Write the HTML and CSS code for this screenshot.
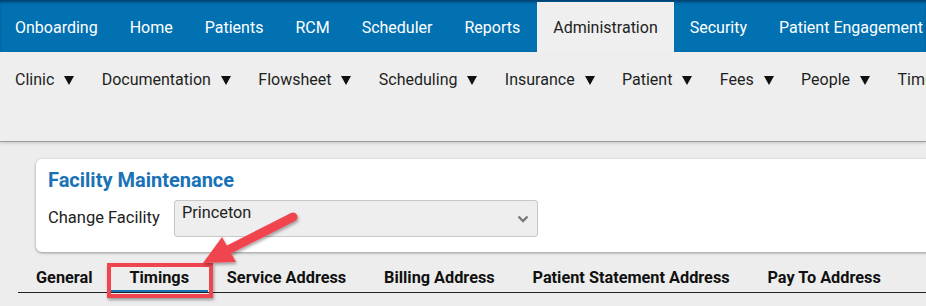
FILE: index.html
```html
<!DOCTYPE html>
<html>
<head>
<meta charset="utf-8">
<link rel="stylesheet" href="styles.css">
</head>
<body>
<nav class="topnav">
  <a class="top-item">Onboarding</a>
  <a class="top-item">Home</a>
  <a class="top-item">Patients</a>
  <a class="top-item">RCM</a>
  <a class="top-item">Scheduler</a>
  <a class="top-item">Reports</a>
  <a class="top-item active">Administration</a>
  <a class="top-item">Security</a>
  <a class="top-item">Patient Engagement</a>
</nav>
<nav class="subnav">
  <span class="sub-item">Clinic<span class="caret"></span></span>
  <span class="sub-item">Documentation<span class="caret"></span></span>
  <span class="sub-item">Flowsheet<span class="caret"></span></span>
  <span class="sub-item">Scheduling<span class="caret"></span></span>
  <span class="sub-item">Insurance<span class="caret"></span></span>
  <span class="sub-item">Patient<span class="caret"></span></span>
  <span class="sub-item">Fees<span class="caret"></span></span>
  <span class="sub-item">People<span class="caret"></span></span>
  <span class="sub-item">Timings<span class="caret"></span></span>
</nav>
<main class="content">
  <section class="card">
    <h1 class="title">Facility Maintenance</h1>
    <div class="field-row">
      <label class="label">Change Facility</label>
      <div class="select">
        <span class="select-value">Princeton</span>
        <svg class="chev" width="12" height="8" viewBox="0 0 12 8"><path d="M1.5 1.5 L6 6 L10.5 1.5" fill="none" stroke="#7a7a7a" stroke-width="2.4"/></svg>
      </div>
    </div>
  </section>
  <div class="tabs">
    <span class="tab">General</span>
    <span class="tab selected">Timings</span>
    <span class="tab">Service Address</span>
    <span class="tab">Billing Address</span>
    <span class="tab">Patient Statement Address</span>
    <span class="tab">Pay To Address</span>
  </div>
</main>
<div class="callout-box"></div>
<svg class="callout-arrow" width="926" height="306" viewBox="0 0 926 306">
  <defs>
    <filter id="sh" x="-20%" y="-20%" width="140%" height="140%">
      <feDropShadow dx="1" dy="2" stdDeviation="1.5" flood-color="#000" flood-opacity="0.35"/>
    </filter>
  </defs>
  <g filter="url(#sh)">
    <line x1="293" y1="217" x2="226" y2="251" stroke="#f0454f" stroke-width="9" stroke-linecap="round"/>
    <polygon points="203,263 236,262 222,237" fill="#f0454f"/>
  </g>
</svg>
</body>
</html>
```
FILE: styles.css
```css
* { box-sizing: border-box; }
html, body { margin: 0; padding: 0; }
body {
  width: 926px;
  height: 306px;
  overflow: hidden;
  font-family: Roboto, "Liberation Sans", Arial, sans-serif;
  background: #ededed;
  position: relative;
}
.topnav {
  display: flex;
  height: 52px;
  background: #0171b1;
  box-shadow: inset 0 3px 3px -1px rgba(0, 20, 50, 0.55);
  white-space: nowrap;
}
.top-item {
  display: flex;
  align-items: center;
  padding: 0 16px 0 15px;
  margin-right: 1px;
  color: #fff;
  font-size: 16px;
  margin-top: 2px;
}
.top-item.active {
  background: #efefef;
  color: #222;
  padding: 0 16px 0 16px;
}
.subnav {
  display: flex;
  height: 90px;
  background: #eeeeee;
  padding: 18px 0 0 15px;
  border-bottom: 1px solid #9c9c9c;
  box-shadow: 0 1px 3px rgba(0,0,0,0.18);
  white-space: nowrap;
}
.sub-item {
  display: flex;
  align-items: center;
  font-size: 16px;
  color: #1e1e1e;
  line-height: 20px;
  height: 20px;
  margin-right: 27.4px;
}
.caret {
  display: inline-block;
  width: 0;
  height: 0;
  margin-left: 10px;
  margin-top: 1px;
  border-left: 5px solid transparent;
  border-right: 5px solid transparent;
  border-top: 9px solid #111;
}
.content {
  padding: 17px 0 0 36px;
}
.card {
  background: #fff;
  border-radius: 6px 0 0 6px;
  box-shadow: 0 1px 3px rgba(0,0,0,0.38);
  padding: 9px 12px 15px 12px;
  margin-right: -10px;
}
.title {
  margin: 0 0 8px 0;
  font-size: 20px;
  line-height: 24px;
  font-weight: 700;
  color: #1a72b6;
}
.field-row {
  display: flex;
  align-items: center;
}
.label {
  font-size: 16.5px;
  color: #222;
  width: 126px;
  padding-bottom: 2px;
}
.select {
  width: 364px;
  height: 37px;
  background: #eeeeee;
  border: 1px solid #c8c8c8;
  border-radius: 3px;
  display: flex;
  justify-content: space-between;
  padding: 2px 8px 0 7px;
  font-size: 16.3px;
  color: #222;
}
.select-value { line-height: 20px; }
.chev { margin-top: 12px; }
.tabs {
  display: flex;
  margin-left: -18.5px;
  margin-top: 15px;
  border-bottom: 1px solid #222;
  white-space: nowrap;
}
.tab {
  padding: 1px 18.9px 0 18.9px;
  font-size: 16.3px;
  font-weight: 700;
  color: #111;
  line-height: 19px;
  height: 25px;
}
.tab:first-child { padding-left: 18.5px; padding-right: 18px; }
.tab.selected {
  border-bottom: 2px solid #1a72b6;
  margin-bottom: -1px;
}
.callout-box {
  position: absolute;
  left: 107px;
  top: 263px;
  width: 106px;
  height: 35px;
  border: 4px solid #f0454f;
  box-shadow: 1px 2px 3px rgba(0,0,0,0.35);
}
.callout-arrow {
  position: absolute;
  left: 0;
  top: 0;
  pointer-events: none;
}
```
